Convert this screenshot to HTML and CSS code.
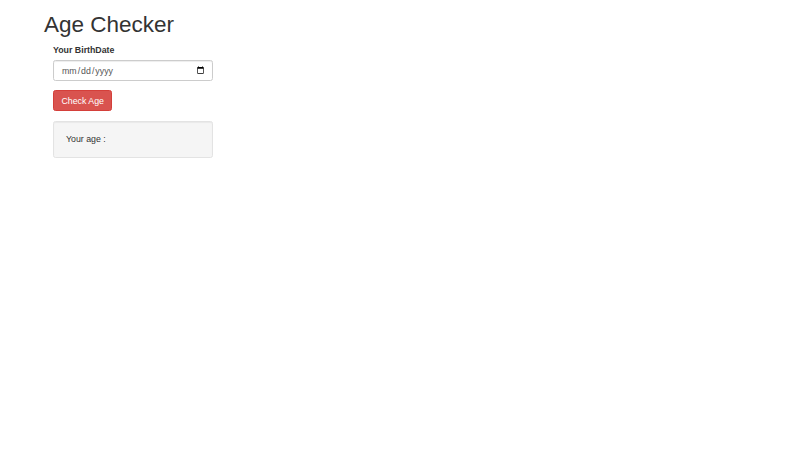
FILE: index.html
```html
<!DOCTYPE html>
<html>
<head>
<meta charset="utf-8">
<title>Age Checker</title>
<link rel="stylesheet" href="styles.css">
</head>
<body>
<div class="page">
  <h1 class="title">Age Checker</h1>
  <div class="panel">
    <form class="form">
      <div class="form-group">
        <label class="label" for="birth">Your BirthDate</label>
        <input class="date-input" id="birth" type="date">
      </div>
      <button type="button" class="btn-danger">Check Age</button>
    </form>
    <div class="well">Your age :</div>
  </div>
</div>
</body>
</html>
```
FILE: styles.css
```css
html, body {
  margin: 0;
  padding: 0;
  background: #fff;
}
body {
  font-family: "Liberation Sans", Arial, Helvetica, sans-serif;
  font-size: 8.8px;
  line-height: 1.42857;
  color: #333;
}
.page {
  padding-left: 44px;
}
.title {
  font-family: "Liberation Sans", Arial, sans-serif;
  font-weight: 500;
  font-size: 22.5px;
  line-height: 1.1;
  margin: 13.4px 0 6.2px 0;
  color: #333;
}
.panel {
  padding-left: 9px;
  width: 160px;
}
.form-group {
  margin-bottom: 9.3px;
}
.label {
  display: block;
  font-weight: bold;
  margin-bottom: 3.1px;
}
.date-input {
  display: block;
  box-sizing: border-box;
  width: 160px;
  height: 21.1px;
  padding: 0 7px;
  margin: 0;
  font-family: "Liberation Sans", Arial, sans-serif;
  font-size: 8.8px;
  color: #555;
  background: #fff;
  border: 1px solid #ccc;
  border-radius: 2.5px;
  box-shadow: inset 0 1px 1px rgba(0,0,0,.075);
}
.date-input::-webkit-calendar-picker-indicator {
  width: 9px;
  height: 9px;
  margin: 0;
  padding: 0;
}
.date-input::-webkit-datetime-edit {
  padding: 0;
}
.btn-danger {
  display: block;
  box-sizing: border-box;
  height: 21.1px;
  padding: 0 7.4px;
  margin: 0;
  font-family: "Liberation Sans", Arial, sans-serif;
  font-size: 8.8px;
  color: #fff;
  background: #d9534f;
  border: 1px solid #d43f3a;
  border-radius: 2.5px;
  cursor: pointer;
}
.well {
  box-sizing: border-box;
  margin-top: 10px;
  width: 160px;
  height: 37px;
  padding: 11px 12px;
  background: #f5f5f5;
  border: 1px solid #e3e3e3;
  border-radius: 2.5px;
  box-shadow: inset 0 1px 1px rgba(0,0,0,.05);
  line-height: 12.5px;
}
```
